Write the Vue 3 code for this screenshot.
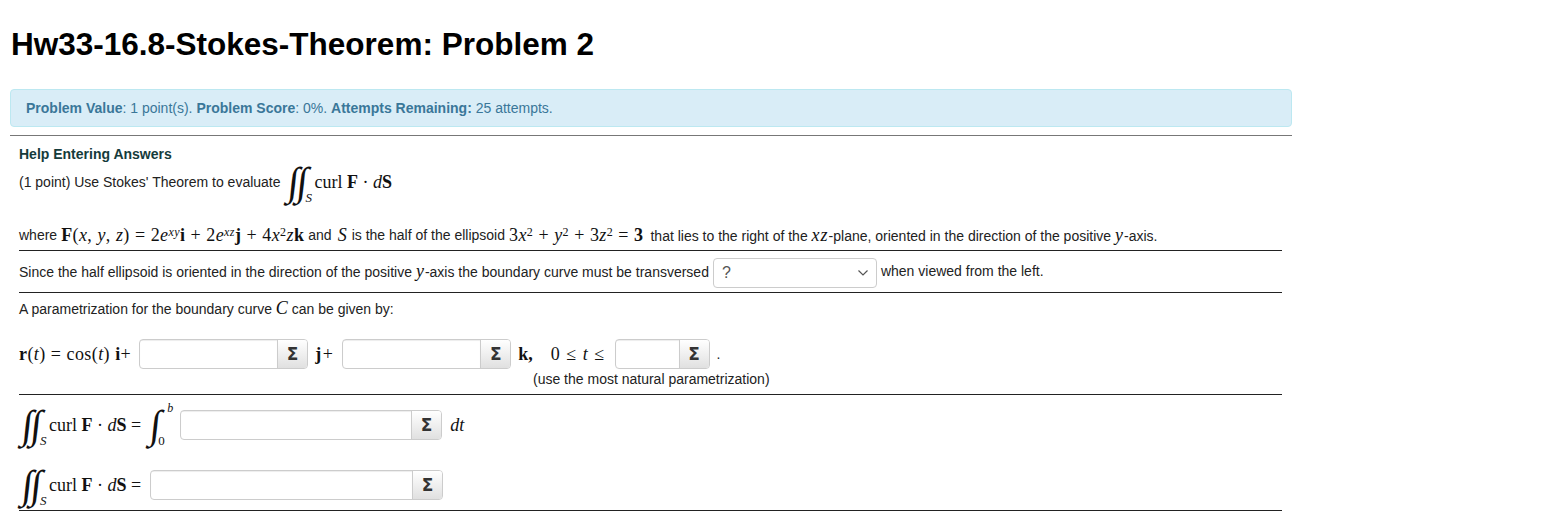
<script setup>
const sigma = 'Σ'
</script>

<template>
  <main class="page">
    <h1 class="title">Hw33-16.8-Stokes-Theorem: Problem 2</h1>
    <div class="alert">
      <b>Problem Value</b>: 1 point(s). <b>Problem Score</b>: 0%. <b>Attempts Remaining:</b> 25 attempts.
    </div>
    <hr class="rule-top" />
    <section class="problem">
      <div class="help">Help Entering Answers</div>
      <div class="line intro">
        <span>(1 point) Use Stokes' Theorem to evaluate</span>
        <span class="math m-intro">
          <span class="dbl"><span class="int">∫∫</span><i class="sub">S</i></span>
          <span>curl <b>F</b> · <i>d</i><b>S</b></span>
        </span>
      </div>
      <div class="line where">
        <span>where</span>
        <span class="math wide"><b>F</b>(<i>x</i>, <i>y</i>, <i>z</i>) = 2<i>e</i><sup><i>xy</i></sup><b>i</b> + 2<i>e</i><sup><i>xz</i></sup><b>j</b> + 4<i>x</i><sup>2</sup><i>z</i><b>k</b></span>
        <span>and</span>
        <span class="math s-var"><i>S</i></span>
        <span>is the half of the ellipsoid</span>
        <span class="math wide">3<i>x</i><sup>2</sup> + <i>y</i><sup>2</sup> + 3<i>z</i><sup>2</sup> = <b>3</b></span>
        <span class="after-eq">that lies to the right of the <span class="math var"><i>xz</i></span>-plane, oriented in the direction of the positive <span class="math var"><i>y</i></span>-axis.</span>
      </div>
      <hr class="rule" />
      <div class="line select-line">
        <span class="lift">Since the half ellipsoid is oriented in the direction of the positive <span class="math var"><i>y</i></span>-axis the boundary curve must be transversed</span>
        <span class="select">
          <span class="qmark">?</span>
          <svg class="chev" viewBox="0 0 12 8" width="12" height="8"><path d="M1.5 1.5 L6 6 L10.5 1.5" fill="none" stroke="#555" stroke-width="1.2" /></svg>
        </span>
        <span class="lift">when viewed from the left.</span>
      </div>
      <hr class="rule" />
      <div class="line param">
        <span>A parametrization for the boundary curve <span class="math"><i>C</i></span> can be given by:</span>
      </div>
      <div class="line r-row">
        <span class="math wide r-part"><b>r</b>(<i>t</i>) = cos(<i>t</i>) <b>i</b>+</span>
        <span class="ans w1"><span class="field"></span><span class="addon">{{ sigma }}</span></span>
        <span class="math j-part"><b>j</b>+</span>
        <span class="ans w1"><span class="field"></span><span class="addon">{{ sigma }}</span></span>
        <span class="math"><b>k,</b></span>
        <span class="math range">0 ≤ <i>t</i> ≤</span>
        <span class="ans w2"><span class="field"></span><span class="addon">{{ sigma }}</span></span>
        <span class="dot">.</span>
      </div>
      <div class="note">(use the most natural parametrization)</div>
      <hr class="rule" />
      <div class="line int-row first">
        <span class="math m-big">
          <span class="dbl"><span class="int">∫∫</span><i class="sub">S</i></span>
          <span>curl <b>F</b> · <i>d</i><b>S</b> =</span>
          <span class="dbl one"><span class="int">∫</span><span class="sub">0</span><i class="sup">b</i></span>
        </span>
        <span class="ans w3"><span class="field"></span><span class="addon">{{ sigma }}</span></span>
        <span class="math dt"><i>dt</i></span>
      </div>
      <div class="line int-row second">
        <span class="math m-big">
          <span class="dbl"><span class="int">∫∫</span><i class="sub">S</i></span>
          <span>curl <b>F</b> · <i>d</i><b>S</b> =</span>
        </span>
        <span class="ans w4"><span class="field"></span><span class="addon">{{ sigma }}</span></span>
      </div>
      <hr class="rule last" />
    </section>
  </main>
</template>

<style scoped>
.page {
  padding: 0 0 0 10px;
  width: 1282px;
  font-family: "Liberation Sans", Arial, sans-serif;
  font-size: 14px;
  color: #222;
}
.title {
  margin: 0;
  padding: 26px 0 0 1px;
  height: 89px;
  box-sizing: border-box;
  font-size: 31.5px;
  line-height: 36px;
  font-weight: 700;
  color: #000;
}
.alert {
  height: 38px;
  box-sizing: border-box;
  padding: 0 15px;
  line-height: 36px;
  font-size: 14px;
  background: #d9edf7;
  border: 1px solid #bce8f1;
  border-radius: 4px;
  color: #3a7799;
  white-space: nowrap;
}
.alert b { font-weight: 700; }
hr { margin: 0; border: 0; }
.rule-top {
  margin-top: 8px;
  border-top: 1px solid #777;
}
.problem {
  padding-left: 9px;
  width: 1263px;
}
.help {
  margin-top: 11px;
  height: 14px;
  line-height: 14px;
  font-weight: 700;
  color: #153b3b;
}
.line {
  display: flex;
  align-items: center;
  white-space: nowrap;
}
.rule {
  border-top: 1px solid #222;
}
.math {
  font-family: "Liberation Serif", "DejaVu Serif", serif;
  font-size: 18px;
  color: #111;
}
.wide { word-spacing: 0.3px; letter-spacing: 0.4px; }
.var { letter-spacing: 1px; }
.s-var { margin: 0 1px 0 2px; }
.after-eq { margin-left: 3px; }
.math sup {
  font-size: 12px;
  line-height: 0;
  vertical-align: 0.45em;
}
.intro {
  height: 42px;
  gap: 4px;
}
.m-intro, .m-big {
  display: inline-flex;
  align-items: center;
}
.dbl {
  position: relative;
  display: inline-block;
  width: 30px;
  height: 40px;
}
.int {
  position: absolute;
  left: 3px;
  top: -3px;
  font-family: "Liberation Serif", serif;
  font-size: 40px;
  line-height: 46px;
  letter-spacing: -2px;
  font-weight: 400;
  transform: skewX(-6deg);
}
.sub {
  position: absolute;
  left: 21px;
  bottom: -2px;
  font-size: 13px;
  line-height: 12px;
}
.sup {
  position: absolute;
  left: 20px;
  top: -3px;
  font-size: 12px;
  line-height: 12px;
}
.one {
  width: 24px;
  margin: 0 0 0 6px;
}
.one .sub { left: 11px; }
.where {
  height: 20px;
  margin-top: 22px;
  gap: 4px;
}
.where + .rule { margin-top: 5px; }
.select-line {
  height: 30px;
  margin: 7px 0 4px;
  gap: 4px;
}
.lift { margin-bottom: 4px; }
.select {
  display: inline-flex;
  align-items: center;
  justify-content: space-between;
  width: 164px;
  height: 30px;
  box-sizing: border-box;
  padding: 0 7px 0 8px;
  border: 1px solid #ccc;
  border-radius: 4px;
  background: #fff;
  color: #555;
}
.qmark { font-size: 16px; }
.param {
  height: 16px;
  margin-top: 7px;
}
.r-row {
  height: 30px;
  margin-top: 23px;
}
.ans {
  display: inline-flex;
  height: 30px;
  box-sizing: border-box;
  border: 1px solid #ccc;
  border-radius: 4px;
  background: #fff;
  overflow: hidden;
}
.field { flex: 1; box-shadow: inset 0 1px 1px rgba(0, 0, 0, 0.075); }
.addon {
  width: 29px;
  border-left: 1px solid #ccc;
  background: linear-gradient(#fff, #e0e0e0);
  display: flex;
  align-items: center;
  justify-content: center;
  font-family: "DejaVu Sans", sans-serif;
  font-weight: 700;
  font-size: 17px;
  color: #333;
}
.r-part { margin-right: 1px; }
.j-part { letter-spacing: 1.5px; margin-right: 1px; }
.w1 { width: 169px; margin: 0 7px; }
.w2 { width: 95px; margin-left: 10px; }
.w3 { width: 262px; margin-left: 9px; }
.w4 { width: 293px; margin-left: 9px; }
.range { margin-left: 18px; word-spacing: 1px; letter-spacing: 0.5px; }
.dot { margin-left: 7px; }
.dt { margin-left: 8px; }
.note {
  height: 16px;
  margin: 2px 0 7px 514px;
  line-height: 16px;
  white-space: nowrap;
}
.int-row { height: 30px; }
.first { margin-top: 15px; }
.second { margin-top: 30px; }
.last { margin-top: 10px; }
</style>
